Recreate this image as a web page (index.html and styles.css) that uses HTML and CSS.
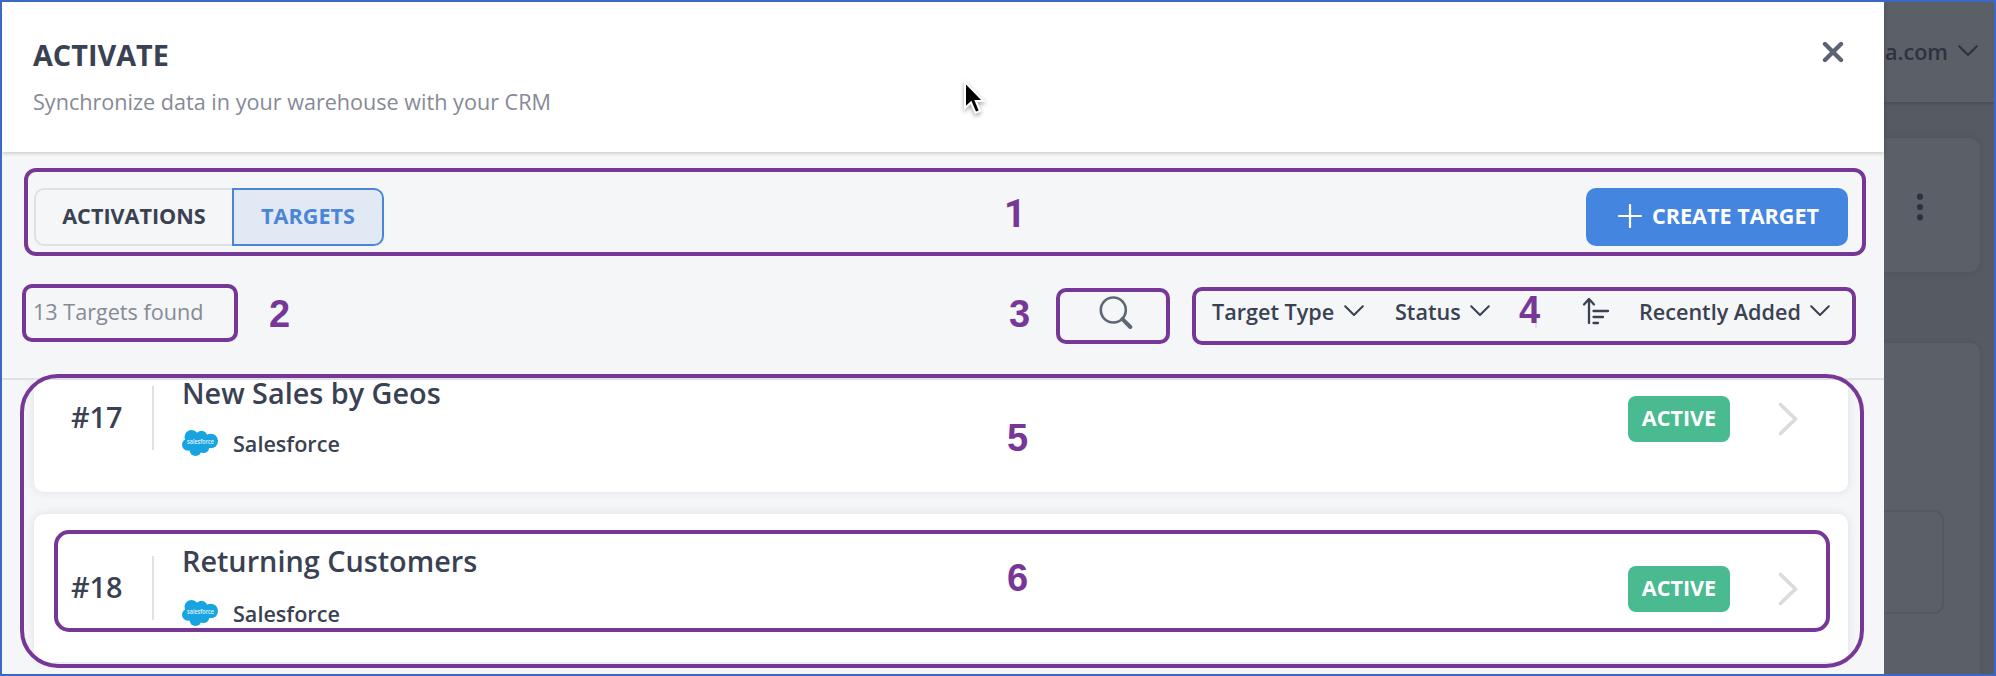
FILE: index.html
```
<!DOCTYPE html>
<html lang="en">
<head>
    <meta charset="UTF-8">
    <title>Activate - Targets</title>
    <link rel="stylesheet" href="styles.css">
</head>
<body>
    <svg class="sprite" aria-hidden="true">
        <symbol id="chevron-down" viewBox="0 0 20 12">
            <path d="M1.2 1.2 L10 10 L18.8 1.2" fill="none" stroke="currentColor" stroke-width="2" stroke-linecap="round" stroke-linejoin="round"/>
        </symbol>
        <symbol id="chevron-right" viewBox="0 0 20 34">
            <path d="M2.5 2.5 L17.5 17 L2.5 31.5" fill="none" stroke="currentColor" stroke-width="3.8" stroke-linecap="round" stroke-linejoin="round"/>
        </symbol>
        <symbol id="cloud" viewBox="0 0 36 26">
            <g fill="#18a3e1">
                <circle cx="9.5" cy="7" r="7"/>
                <circle cx="19.5" cy="6.5" r="5.8"/>
                <circle cx="28.7" cy="11" r="7.3"/>
                <circle cx="6" cy="14.7" r="6"/>
                <circle cx="13.5" cy="20" r="6"/>
                <circle cx="21.5" cy="17.5" r="5.6"/>
                <rect x="7" y="7" width="20" height="12"/>
            </g>
        </symbol>
    </svg>

    <div class="app">
        <div class="panel">
            <div class="panel-header">
                <div>
                    <h1>ACTIVATE</h1>
                    <p>Synchronize data in your warehouse with your CRM</p>
                </div>
                <svg class="close" viewBox="0 0 22 22"><path d="M3 3 L19 19 M19 3 L3 19" stroke="#5c6474" stroke-width="4.4" stroke-linecap="round"/></svg>
            </div>

            <div class="toolbar">
                <div class="tabs">
                    <div class="tab">ACTIVATIONS</div>
                    <div class="tab active">TARGETS</div>
                </div>
                <div class="create-btn">
                    <svg width="24" height="24" viewBox="0 0 24 24"><path d="M12 1 V23 M1 12 H23" stroke="#fff" stroke-width="2.2" stroke-linecap="round"/></svg>
                    <span>CREATE TARGET</span>
                </div>
            </div>

            <div class="filters">
                <div class="count">13 Targets found</div>
                <svg class="search" viewBox="0 0 34 34"><circle cx="14.3" cy="14" r="12.5" fill="none" stroke="#5f6673" stroke-width="2.6"/><path d="M23.5 23.2 L31.3 31" stroke="#5f6673" stroke-width="4" stroke-linecap="round"/></svg>
                <div class="filter type"><span>Target Type</span><svg class="down"><use href="#chevron-down"/></svg></div>
                <div class="filter status"><span>Status</span><svg class="down"><use href="#chevron-down"/></svg></div>
                <div class="separator"></div>
                <svg class="sort" viewBox="0 0 28 28"><path d="M7 26 V3 M2 7.5 L7 2 L12 7.5 M11.5 14 H26 M11.5 20 H21 M11.5 26 H16" fill="none" stroke="#3a4152" stroke-width="2.3" stroke-linecap="round" stroke-linejoin="round"/></svg>
                <div class="filter added"><span>Recently Added</span><svg class="down"><use href="#chevron-down"/></svg></div>
            </div>

            <div class="list">
                <div class="card first">
                    <div class="number">#17</div>
                    <div class="info">
                        <h2>New Sales by Geos</h2>
                        <div class="source">
                            <svg class="cloud" viewBox="0 0 36 26"><use href="#cloud"/><text x="5" y="13.6" textLength="27" lengthAdjust="spacingAndGlyphs">salesforce</text></svg>
                            <span>Salesforce</span>
                        </div>
                    </div>
                    <div class="badge">ACTIVE</div>
                    <svg class="open"><use href="#chevron-right"/></svg>
                </div>
                <div class="card">
                    <div class="number">#18</div>
                    <div class="info">
                        <h2>Returning Customers</h2>
                        <div class="source">
                            <svg class="cloud" viewBox="0 0 36 26"><use href="#cloud"/><text x="5" y="13.6" textLength="27" lengthAdjust="spacingAndGlyphs">salesforce</text></svg>
                            <span>Salesforce</span>
                        </div>
                    </div>
                    <div class="badge">ACTIVE</div>
                    <svg class="open"><use href="#chevron-right"/></svg>
                </div>
            </div>
        </div>

        <!-- dimmed page behind the panel -->
        <div class="behind">
            <div class="behind-header"><span>a.com</span><svg class="down"><use href="#chevron-down"/></svg></div>
            <div class="behind-card menu">
                <svg width="8" height="28" viewBox="0 0 8 28"><g fill="#2d3240"><circle cx="4" cy="3.7" r="3.1"/><circle cx="4" cy="14" r="3.1"/><circle cx="4" cy="24.3" r="3.1"/></g></svg>
            </div>
            <div class="behind-card tall"><div class="behind-box"></div></div>
        </div>
    </div>

    <!-- numbered callouts -->
    <div class="mark mark-1"></div>
    <div class="mark mark-2"></div>
    <div class="mark mark-3"></div>
    <div class="mark mark-4"></div>
    <div class="mark mark-5"></div>
    <div class="mark mark-6"></div>
    <div class="num num-1">1</div>
    <div class="num num-2">2</div>
    <div class="num num-3">3</div>
    <div class="num num-4">4</div>
    <div class="num num-5">5</div>
    <div class="num num-6">6</div>

    <svg class="cursor" viewBox="0 0 24 36"><path d="M2 2 V28 L8 22.5 L12.5 33 L17 31 L12.8 21 H20.5 Z" fill="#000" stroke="#fff" stroke-width="2"/></svg>
</body>
</html>
```
FILE: styles.css
```
* {
    box-sizing: border-box;
}

body {
    margin: 0;
    width: 1996px;
    height: 676px;
    position: relative;
    overflow: hidden;
    font-family: "Open Sans", "Noto Sans", sans-serif;
    font-size: 21.6px;
    line-height: 30px;
    color: #3a4152;
}

h1, h2, p {
    margin: 0;
}

svg {
    display: block;
    flex-shrink: 0;
}

.sprite {
    position: absolute;
    width: 0;
    height: 0;
}

.app {
    display: flex;
    height: 676px;
    border: 2px solid #3a69c5;
    overflow: hidden;
}

/* panel */
.panel {
    width: 1882px;
    flex-shrink: 0;
    background: #f4f6f8;
}

.panel-header {
    position: relative;
    display: flex;
    justify-content: space-between;
    height: 150px;
    padding: 33px 40px 0 31px;
    background: #fff;
    box-shadow: 0 1px 4px rgba(0, 0, 0, 0.22);
}

.panel-header h1 {
    font-size: 28.8px;
    line-height: 40px;
    font-weight: 700;
}

.panel-header p {
    margin-top: 12px;
    color: #858a96;
}

.close {
    width: 22px;
    height: 22px;
    margin-top: 6px;
}

.toolbar {
    display: flex;
    justify-content: space-between;
    padding: 36px 36px 0 32px;
}

.tabs {
    display: flex;
    height: 58px;
    font-weight: 700;
}

.tab {
    width: 198px;
    padding-top: 11px;
    text-align: center;
    border: 2px solid #dfe1e6;
    border-right: none;
    border-radius: 10px 0 0 10px;
}

.tab.active {
    width: 152px;
    color: #4a86d8;
    background: #e1e9f5;
    border: 2px solid #4a86d8;
    border-radius: 0 10px 10px 0;
}

.create-btn {
    display: flex;
    align-items: center;
    gap: 10px;
    width: 262px;
    height: 58px;
    padding: 0 0 3px 32px;
    border-radius: 10px;
    background: #4385df;
    color: #fff;
    font-weight: 700;
}

.filters {
    display: flex;
    align-items: center;
    height: 134px;
    padding: 0 0 0 31px;
    border-bottom: 2px solid #dee0e5;
    font-weight: 600;
}

.count {
    width: 1066px;
    color: #858a96;
    font-weight: 400;
}

.search {
    width: 34px;
    height: 34px;
    margin-top: 2px;
}

.filter {
    display: flex;
    align-items: center;
    justify-content: space-between;
    height: 30px;
}

.down {
    width: 20px;
    height: 12px;
    margin-top: -2px;
}

.type {
    width: 152px;
    margin-left: 79px;
}

.status {
    width: 95px;
    margin-left: 31px;
}

.separator {
    width: 2px;
    height: 32px;
    margin-left: 45px;
    background: #dee0e5;
}

.sort {
    width: 28px;
    height: 28px;
    margin: -2px 0 0 45px;
}

.added {
    width: 191px;
    margin-left: 29px;
}

/* target cards */
.list {
    height: 292px;
    padding: 0 36px 0 32px;
    overflow: hidden;
}

.card {
    display: flex;
    align-items: center;
    height: 148px;
    margin-bottom: 22px;
    background: #fff;
    border-radius: 10px;
    box-shadow: 0 0 10px rgba(40, 50, 70, 0.1);
}

.card.first {
    margin-top: -36px;
}

.number {
    width: 120px;
    height: 64px;
    padding: 11px 0 0 37px;
    border-right: 2px solid #dfe1e4;
    font-size: 28.8px;
    line-height: 40px;
    font-weight: 600;
}

.info {
    flex: 1;
    height: 112px;
    padding: 17px 0 0 28px;
}

.info h2 {
    font-size: 28.8px;
    line-height: 24px;
    font-weight: 600;
}

.card.first h2 {
    margin: 2px 0 -2px;
}

.source {
    display: flex;
    align-items: center;
    height: 30px;
    margin-top: 26px;
    font-weight: 600;
}

.cloud {
    width: 36px;
    height: 26px;
    margin: -2px 15px 0 0;
}

.cloud text {
    fill: #e3f4fc;
    font-size: 6.4px;
}

.badge {
    width: 102px;
    height: 46px;
    margin-top: 2px;
    border-radius: 8px;
    background: #4abb90;
    color: #fff;
    font-weight: 700;
    line-height: 44px;
    text-align: center;
}

.open {
    width: 20px;
    height: 34px;
    margin: 2px 50px 0 48px;
    color: #dadbdf;
}

/* page behind */
.behind {
    flex: 1;
    background: #565a63;
    overflow: hidden;
}

.behind-header {
    display: flex;
    align-items: center;
    justify-content: space-between;
    height: 100px;
    padding: 0 16px 0 1px;
    background: #5b5f66;
    box-shadow: 0 1px 4px rgba(0, 0, 0, 0.2);
    color: #2d3240;
    font-weight: 600;
}

.behind-card {
    width: 96px;
    background: #5b5f67;
    box-shadow: 0 0 6px rgba(0, 0, 0, 0.1);
}

.behind-card.menu {
    height: 134px;
    margin-top: 36px;
    padding: 55px 0 0 32px;
    border-radius: 0 10px 10px 0;
}

.behind-card.tall {
    height: 340px;
    margin-top: 71px;
    padding-top: 167px;
    border-radius: 0 10px 0 0;
}

.behind-box {
    width: 60px;
    height: 104px;
    border: 2px solid #535760;
    border-left: none;
    border-radius: 0 10px 10px 0;
}

/* callouts drawn over the page */
.mark {
    position: absolute;
    border: 4px solid #763796;
    border-radius: 10px;
}

.mark-1 { left: 24px; top: 168px; width: 1842px; height: 88px; border-radius: 12px; }
.mark-2 { left: 22px; top: 284px; width: 216px; height: 58px; }
.mark-3 { left: 1056px; top: 288px; width: 114px; height: 56px; }
.mark-4 { left: 1192px; top: 287px; width: 664px; height: 58px; }
.mark-5 { left: 20px; top: 374px; width: 1844px; height: 294px; border-radius: 38px; }
.mark-6 { left: 54px; top: 530px; width: 1776px; height: 102px; border-radius: 15px; }

.num {
    position: absolute;
    color: #763796;
    font-family: "Liberation Sans", Arial, sans-serif;
    font-size: 38px;
    line-height: 44px;
    font-weight: 700;
}

.num-1 { left: 1004px; top: 192px; font-family: Roboto, sans-serif; }
.num-2 { left: 269px; top: 292px; }
.num-3 { left: 1009px; top: 292px; }
.num-4 { left: 1519px; top: 288px; }
.num-5 { left: 1007px; top: 416px; }
.num-6 { left: 1007px; top: 556px; }

.cursor {
    position: absolute;
    left: 963px;
    top: 80px;
    width: 24px;
    height: 36px;
    filter: drop-shadow(0 2px 2px rgba(0, 0, 0, 0.35));
}
```
